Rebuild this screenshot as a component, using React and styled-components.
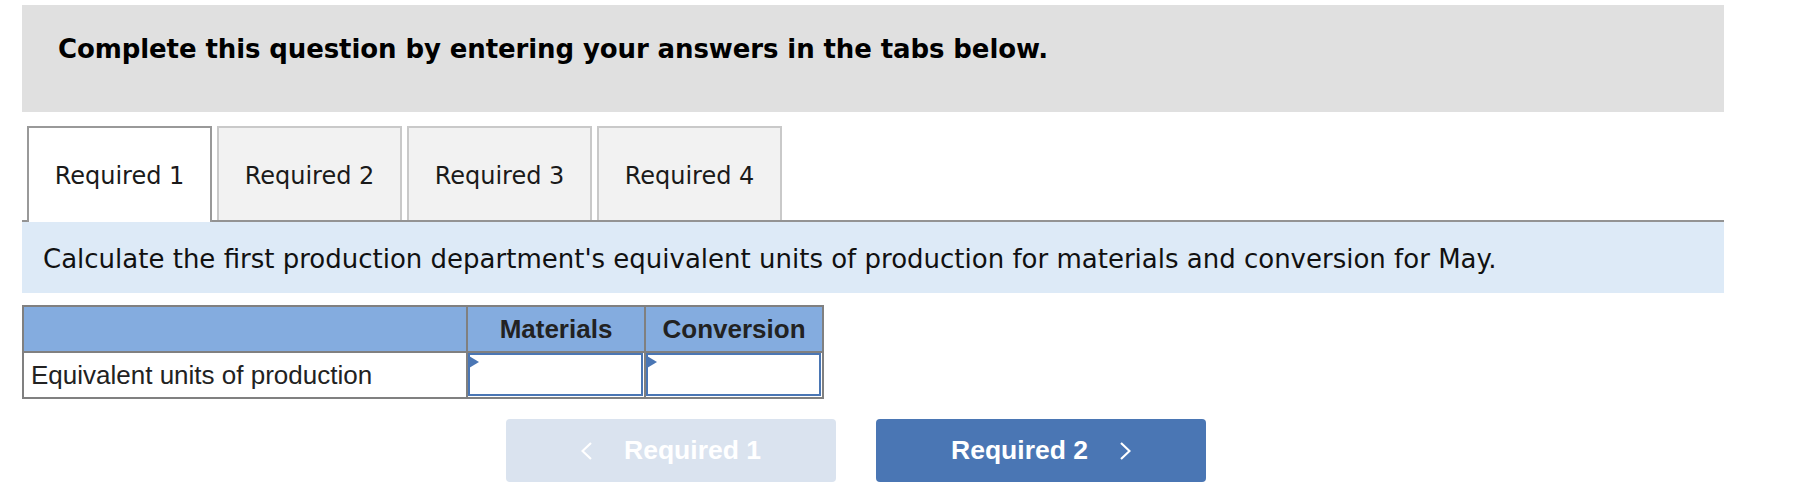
import React from "react";
import styled, { createGlobalStyle } from "styled-components";

const GlobalStyle = createGlobalStyle`
  body {
    margin: 0;
    background: #fff;
  }
`;

const tabs = ["Required 1", "Required 2", "Required 3", "Required 4"];

function Chevron({ left }) {
  return (
    <svg width="11" height="18" viewBox="0 0 11 18">
      <polyline
        points={left ? "10,1 1.5,9 10,17" : "1,1 9.5,9 1,17"}
        fill="none"
        stroke="#fff"
        strokeWidth="2.2"
      />
    </svg>
  );
}

function AnswerCell() {
  return (
    <InputCell>
      <Input type="text" />
      <Marker />
    </InputCell>
  );
}

export default function App() {
  return (
    <>
      <GlobalStyle />
      <Page>
        <Banner>
          Complete this question by entering your answers in the tabs below.
        </Banner>
        <TabList>
          {tabs.map((t, i) => (
            <Tab key={t} $active={i === 0}>
              {t}
            </Tab>
          ))}
        </TabList>
        <Prompt>
          Calculate the first production department's equivalent units of
          production for materials and conversion for May.
        </Prompt>
        <Grid>
          <HeadCell />
          <HeadCell>Materials</HeadCell>
          <HeadCell>Conversion</HeadCell>
          <LabelCell>Equivalent units of production</LabelCell>
          <AnswerCell />
          <AnswerCell />
        </Grid>
        <Nav>
          <NavButton $disabled>
            <Chevron left />
            <span>Required 1</span>
          </NavButton>
          <NavButton>
            <span>Required 2</span>
            <Chevron />
          </NavButton>
        </Nav>
      </Page>
    </>
  );
}

const Page = styled.div`
  width: 1702px;
  padding: 5px 0 20px 22px;
`;

const Banner = styled.div`
  box-sizing: border-box;
  height: 107px;
  padding: 29px 36px 0;
  background: #e0e0e0;
  font-family: "DejaVu Sans", Verdana, sans-serif;
  font-weight: bold;
  font-size: 26px;
  letter-spacing: -0.1px;
  line-height: 30px;
  color: #000;
`;

const TabList = styled.div`
  display: flex;
  gap: 5px;
  height: 94px;
  margin-top: 14px;
  padding-left: 5px;
  border-bottom: 2px solid #939393;
`;

const Tab = styled.div`
  box-sizing: border-box;
  width: 185px;
  height: ${(props) => (props.$active ? "96px" : "94px")};
  display: flex;
  align-items: center;
  justify-content: center;
  padding: ${(props) => (props.$active ? "3px 0 2px" : "3px 0 0")};
  border: 2px solid ${(props) => (props.$active ? "#999" : "#c9c9c9")};
  border-bottom: none;
  background: ${(props) => (props.$active ? "#fff" : "#f2f2f2")};
  font-family: "DejaVu Sans", Verdana, sans-serif;
  font-size: 24px;
  color: #1a1a1a;
`;

const Prompt = styled.div`
  box-sizing: border-box;
  height: 71px;
  padding: 22px 0 0 21px;
  background: #ddeaf7;
  font-family: "DejaVu Sans", Verdana, sans-serif;
  font-size: 26px;
  line-height: 30px;
  color: #111;
`;

const Grid = styled.div`
  display: grid;
  grid-template-columns: 442px 176px 176px;
  grid-auto-rows: 44px;
  gap: 2px;
  width: fit-content;
  margin-top: 12px;
  padding: 2px;
  background: #808080;
  font-family: "Liberation Sans", Arial, sans-serif;
  font-size: 26px;
  color: #222;
`;

const HeadCell = styled.div`
  display: flex;
  align-items: center;
  justify-content: center;
  background: #84acdf;
  font-weight: bold;
`;

const LabelCell = styled.div`
  display: flex;
  align-items: center;
  padding-left: 7px;
  background: #fff;
`;

const InputCell = styled.div`
  position: relative;
  box-sizing: border-box;
  padding: 0 1px 1px 0;
  background: #fff;
`;

const Input = styled.input`
  box-sizing: border-box;
  width: 100%;
  height: 100%;
  margin: 0;
  border: 2px solid #4a76b4;
  outline: none;
  background: #fff;
`;

const Marker = styled.span`
  position: absolute;
  left: 1px;
  top: 3px;
  width: 0;
  height: 0;
  border-left: 10px solid #4a76b4;
  border-top: 6px solid transparent;
  border-bottom: 6px solid transparent;
`;

const Nav = styled.div`
  display: flex;
  gap: 40px;
  margin-top: 20px;
  padding-left: 484px;
`;

const NavButton = styled.button`
  width: 330px;
  height: 63px;
  display: flex;
  align-items: center;
  justify-content: center;
  gap: 32px;
  padding: 0;
  border: none;
  border-radius: 4px;
  background: ${(props) => (props.$disabled ? "#dae3ef" : "#4a76b4")};
  color: #fff;
  font-family: "Liberation Sans", Arial, sans-serif;
  font-weight: bold;
  font-size: 26.5px;
`;
